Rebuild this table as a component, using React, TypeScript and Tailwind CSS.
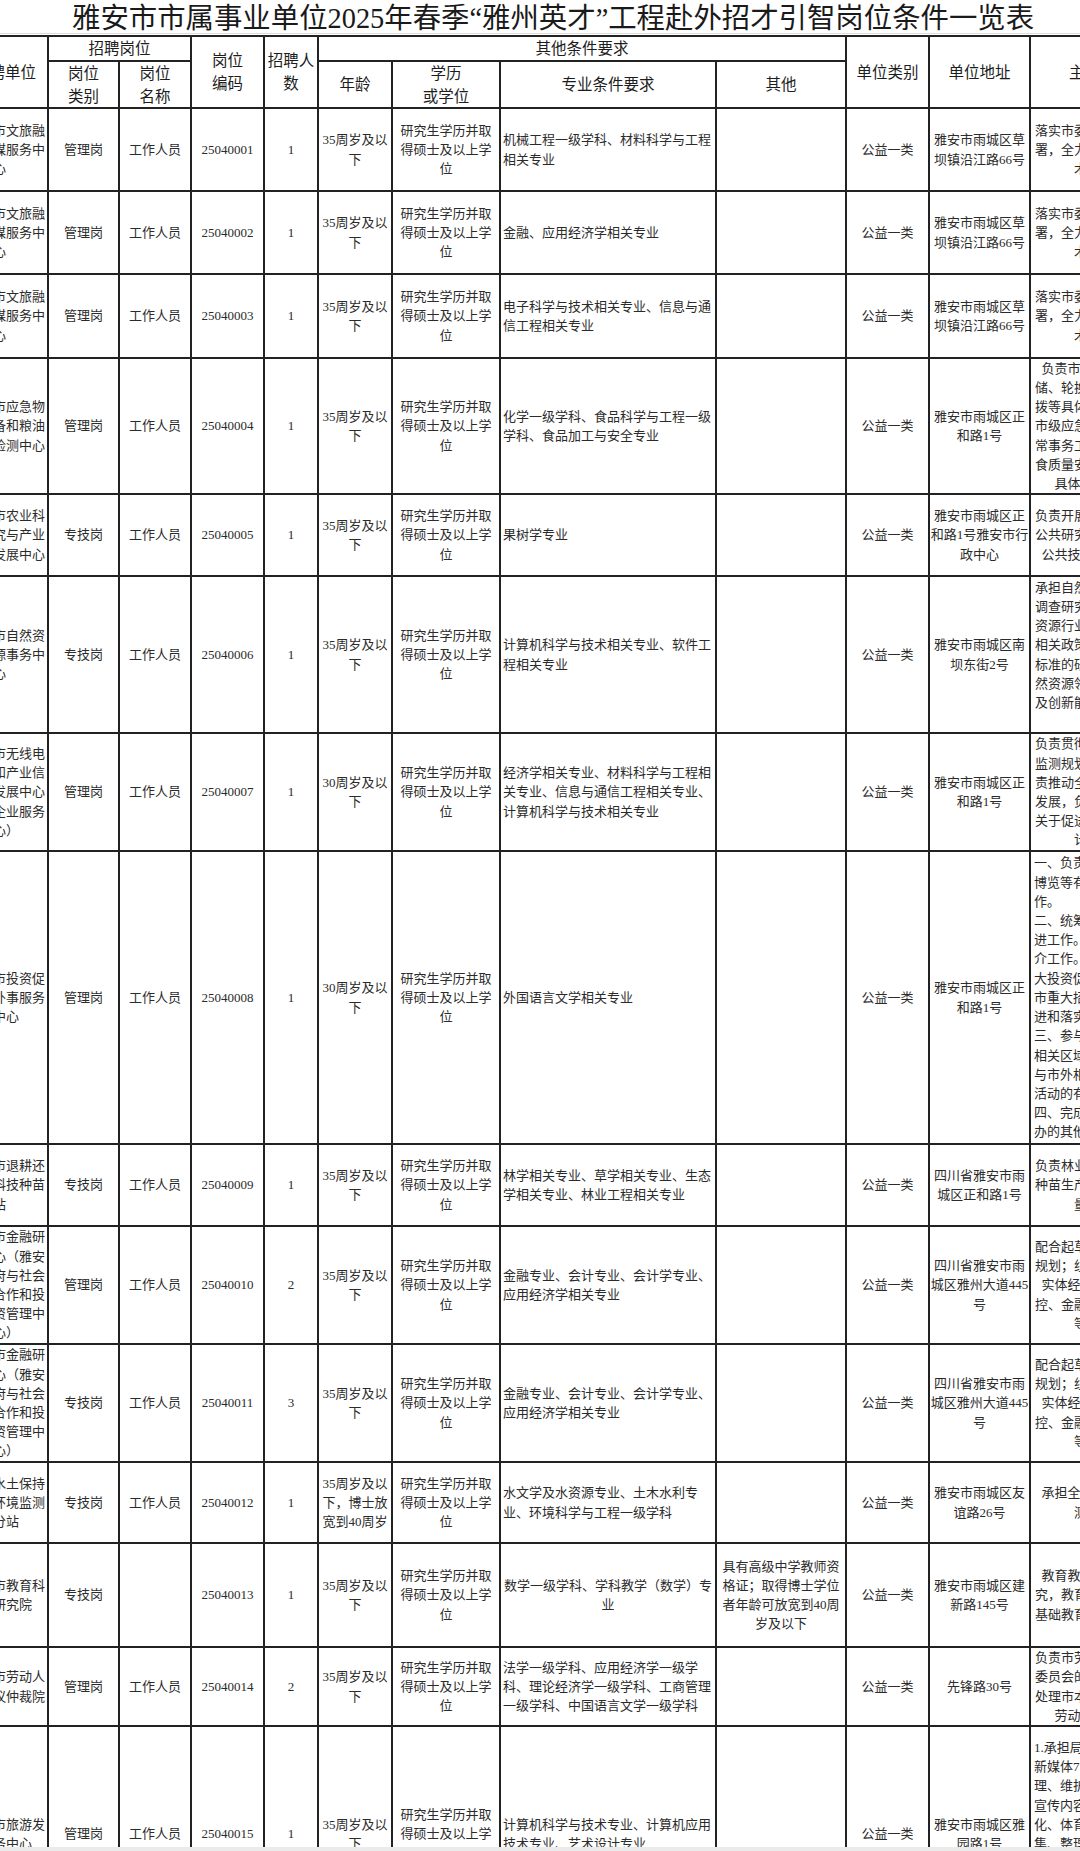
import React from 'react';

type Row = {
  h: string;
  unit: string[];
  type: string;
  name: string;
  code: string;
  num: string;
  age: string[];
  major: string[];
  majorCenter?: boolean;
  other: string[];
  addr: string[];
  duty: string[];
  dutyLeft?: boolean;
};

const EDU = ['研究生学历并取', '得硕士及以上学', '位'];
const AGE35 = ['35周岁及以', '下'];
const AGE30 = ['30周岁及以', '下'];
const ADDR_CB = ['雅安市雨城区草', '坝镇沿江路66号'];
const ADDR_ZH = ['雅安市雨城区正', '和路1号'];
const DUTY_WL = ['落实市委市政府决策部', '署，全力做好融媒体技', '术服务。'];
const DUTY_JR = ['配合起草全市金融发展', '规划；组织推动金融为', '实体经济发展；协调', '控、金融风险防范化解', '等工作。'];
const UNIT_JR = ['市金融研', '心（雅安', '府与社会', '合作和投', '资管理中', '心）'];
const ADDR_JR = ['四川省雅安市雨', '城区雅州大道445', '号'];

const rows: Row[] = [
  { h: 'h-[83px]', unit: ['市文旅融', '媒服务中', '心'], type: '管理岗', name: '工作人员', code: '25040001', num: '1', age: AGE35, major: ['机械工程一级学科、材料科学与工程', '相关专业'], other: [], addr: ADDR_CB, duty: DUTY_WL },
  { h: 'h-[83px]', unit: ['市文旅融', '媒服务中', '心'], type: '管理岗', name: '工作人员', code: '25040002', num: '1', age: AGE35, major: ['金融、应用经济学相关专业'], other: [], addr: ADDR_CB, duty: DUTY_WL },
  { h: 'h-[84px]', unit: ['市文旅融', '媒服务中', '心'], type: '管理岗', name: '工作人员', code: '25040003', num: '1', age: AGE35, major: ['电子科学与技术相关专业、信息与通', '信工程相关专业'], other: [], addr: ADDR_CB, duty: DUTY_WL },
  { h: 'h-[136px]', unit: ['市应急物', '备和粮油', '检测中心'], type: '管理岗', name: '工作人员', code: '25040004', num: '1', age: AGE35, major: ['化学一级学科、食品科学与工程一级', '学科、食品加工与安全专业'], other: [], addr: ADDR_ZH, duty: ['负责市级应急物资储', '储、轮换、日常管理调', '拨等具体工作，负责全', '市级应急物资储备的日', '常事务工作，承担市粮', '食质量安全检验监测等', '具体技术工作。'] },
  { h: 'h-[82px]', unit: ['市农业科', '究与产业', '发展中心'], type: '专技岗', name: '工作人员', code: '25040005', num: '1', age: AGE35, major: ['果树学专业'], other: [], addr: ['雅安市雨城区正', '和路1号雅安市行', '政中心'], duty: ['负责开展农业科技创新', '公共研究、成果转化和', '公共技术推广服务。'] },
  { h: 'h-[157px]', unit: ['市自然资', '源事务中', '心'], type: '专技岗', name: '工作人员', code: '25040006', num: '1', age: AGE35, major: ['计算机科学与技术相关专业、软件工', '程相关专业'], other: [], addr: ['雅安市雨城区南', '坝东街2号'], duty: ['承担自然资源领域基础', '调查研究工作，开展各', '资源行业发展战略、规', '相关政策的研究与技术', '标准的研究和制定；自', '然资源领域科技创新以', '及创新能力建设等技术', '工作。'] },
  { h: 'h-[118px]', unit: ['市无线电', '和产业信', '发展中心', '企业服务', '心）'], type: '管理岗', name: '工作人员', code: '25040007', num: '1', age: AGE30, major: ['经济学相关专业、材料科学与工程相', '关专业、信息与通信工程相关专业、', '计算机科学与技术相关专业'], other: [], addr: ADDR_ZH, duty: ['负责贯彻落实无线电的', '监测规划组织实施；负', '责推动全市无线电产业', '发展，负责贯彻落实省', '关于促进中小企业发展', '计划任务'] },
  { h: 'h-[293px]', unit: ['市投资促', '外事服务', '中心'], type: '管理岗', name: '工作人员', code: '25040008', num: '1', age: AGE30, major: ['外国语言文学相关专业'], other: [], addr: ADDR_ZH, dutyLeft: true, duty: ['一、负责组织参加各类', '博览等有关会议活动工', '作。', '二、统筹全市投资促', '进工作。负责项目推', '介工作。负责组织重', '大投资促进活动，协调', '市重大招商引资项目推', '进和落实工作。', '三、参与组织成渝地区', '相关区域合作交流及本', '与市外相关地区的经济', '活动的有关具体工作。', '四、完成市委、市政府交', '办的其他任务。'] },
  { h: 'h-[82px]', unit: ['市退耕还', '科技种苗', '站'], type: '专技岗', name: '工作人员', code: '25040009', num: '1', age: AGE35, major: ['林学相关专业、草学相关专业、生态', '学相关专业、林业工程相关专业'], other: [], addr: ['四川省雅安市雨', '城区正和路1号'], duty: ['负责林业和退耕还林的', '种苗生产技术推广和质', '量监管。'] },
  { h: 'h-[118px]', unit: UNIT_JR, type: '管理岗', name: '工作人员', code: '25040010', num: '2', age: AGE35, major: ['金融专业、会计专业、会计学专业、', '应用经济学相关专业'], other: [], addr: ADDR_JR, duty: DUTY_JR },
  { h: 'h-[118px]', unit: UNIT_JR, type: '专技岗', name: '工作人员', code: '25040011', num: '3', age: AGE35, major: ['金融专业、会计专业、会计学专业、', '应用经济学相关专业'], other: [], addr: ADDR_JR, duty: DUTY_JR },
  { h: 'h-[81px]', unit: ['水土保持', '环境监测', '分站'], type: '专技岗', name: '工作人员', code: '25040012', num: '1', age: ['35周岁及以', '下，博士放', '宽到40周岁'], major: ['水文学及水资源专业、土木水利专', '业、环境科学与工程一级学科'], other: [], addr: ['雅安市雨城区友', '谊路26号'], duty: ['承担全市水土保持监', '测工作。'] },
  { h: 'h-[104px]', unit: ['市教育科', '研究院'], type: '专技岗', name: '', code: '25040013', num: '1', age: AGE35, major: ['数学一级学科、学科教学（数学）专', '业'], majorCenter: true, other: ['具有高级中学教师资', '格证；取得博士学位', '者年龄可放宽到40周', '岁及以下'], addr: ['雅安市雨城区建', '新路145号'], duty: ['教育教学改革实践研', '究，教育质量监测评价', '基础教育教学业务指导'] },
  { h: 'h-[79px]', unit: ['市劳动人', '议仲裁院'], type: '管理岗', name: '工作人员', code: '25040014', num: '2', age: AGE35, major: ['法学一级学科、应用经济学一级学', '科、理论经济学一级学科、工商管理', '一级学科、中国语言文学一级学科'], other: [], addr: ['先锋路30号'], duty: ['负责市劳动人事争议仲', '委员会的日常工作，依', '处理市本级劳动人事争', '劳动争议案件。'] },
  { h: 'h-[216px]', unit: ['市旅游发', '务中心'], type: '管理岗', name: '工作人员', code: '25040015', num: '1', age: AGE35, major: ['计算机科学与技术专业、计算机应用', '技术专业、艺术设计专业'], other: [], addr: ['雅安市雨城区雅', '园路1号'], dutyLeft: true, duty: ['1.承担局属新媒体平台', '新媒体7个平台的运营管', '理、维护及内容更新；', '宣传内容的策划与推广，', '化、体育、旅游等宣传', '集、整理和归档工作。', '2.负责旅游发展相关', '数据统计分析工作。', '3.完成领导交办的其他', '工作。'] },
];

const Lines = ({ lines }: { lines: string[] }) => (
  <div className="-my-[2px]">
    {lines.map((l, i) => (
      <div key={i} className="whitespace-nowrap">
        {l}
      </div>
    ))}
  </div>
);

const hd = 'border-2 border-[#222] p-0 align-middle text-center text-[15.5px] leading-[23px] text-[#1d1d1d]';
const td = 'border-2 border-[#222] p-0 align-middle text-[13px] leading-[19.2px] text-[#2b2b2b]';

export default function App() {
  return (
    <div className="w-[1080px] h-[1851px] overflow-hidden flex flex-col bg-white font-['Liberation_Serif','Noto_Sans_CJK_SC',serif]">
      <div className="h-[33px] shrink-0 pl-[72px] text-[28.4px] leading-[33px] text-[#1a1a1a] whitespace-nowrap pt-[2px]">
        雅安市市属事业单位2025年春季“雅州英才”工程赴外招才引智岗位条件一览表
      </div>
      <div className="h-[1px] shrink-0 bg-[#dcdcdc]" />
      <div className="flex-1 min-h-0 overflow-hidden pt-[1px]">
        <table className="table-fixed border-collapse ml-[-39px] w-[1208px]">
          <colgroup>
            <col className="w-[86px]" />
            <col className="w-[71px]" />
            <col className="w-[72px]" />
            <col className="w-[73px]" />
            <col className="w-[54px]" />
            <col className="w-[74px]" />
            <col className="w-[108px]" />
            <col className="w-[216px]" />
            <col className="w-[130px]" />
            <col className="w-[83px]" />
            <col className="w-[101px]" />
            <col className="w-[140px]" />
          </colgroup>
          <thead>
            <tr className="h-[24px]">
              <td rowSpan={2} className={hd}>招聘单位</td>
              <td colSpan={2} className={hd}>招聘岗位</td>
              <td rowSpan={2} className={hd}>
                <Lines lines={['岗位', '编码']} />
              </td>
              <td rowSpan={2} className={hd}>
                <Lines lines={['招聘人', '数']} />
              </td>
              <td colSpan={4} className={hd}>其他条件要求</td>
              <td rowSpan={2} className={hd}>单位类别</td>
              <td rowSpan={2} className={hd}>单位地址</td>
              <td rowSpan={2} className={hd}>主要职责</td>
            </tr>
            <tr className="h-[47px]">
              <td className={hd}>
                <Lines lines={['岗位', '类别']} />
              </td>
              <td className={hd}>
                <Lines lines={['岗位', '名称']} />
              </td>
              <td className={hd}>年龄</td>
              <td className={hd}>
                <Lines lines={['学历', '或学位']} />
              </td>
              <td className={hd}>专业条件要求</td>
              <td className={hd}>其他</td>
            </tr>
          </thead>
          <tbody>
            {rows.map((r) => (
              <tr key={r.code} className={r.h}>
                <td className={`${td} text-left pl-[30px]`}>
                  <Lines lines={r.unit} />
                </td>
                <td className={`${td} text-center`}>{r.type}</td>
                <td className={`${td} text-center`}>{r.name}</td>
                <td className={`${td} text-center`}>{r.code}</td>
                <td className={`${td} text-center`}>{r.num}</td>
                <td className={`${td} text-center`}>
                  <Lines lines={r.age} />
                </td>
                <td className={`${td} text-center`}>
                  <Lines lines={EDU} />
                </td>
                <td className={`${td} ${r.majorCenter ? 'text-center' : 'text-left pl-[2px]'}`}>
                  <Lines lines={r.major} />
                </td>
                <td className={`${td} text-center`}>
                  <Lines lines={r.other} />
                </td>
                <td className={`${td} text-center`}>公益一类</td>
                <td className={`${td} text-center`}>
                  <Lines lines={r.addr} />
                </td>
                <td className={`${td} ${r.dutyLeft ? 'text-left pl-[3px]' : 'text-center'}`}>
                  <Lines lines={r.duty} />
                </td>
              </tr>
            ))}
          </tbody>
        </table>
      </div>
      <div className="h-[4px] shrink-0 bg-[#ebebeb]" />
    </div>
  );
}
